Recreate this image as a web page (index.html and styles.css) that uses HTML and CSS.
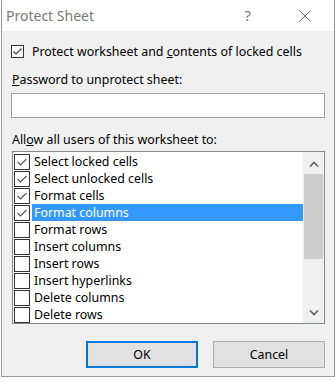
FILE: index.html
```html
<!DOCTYPE html>
<html>
<head>
<meta charset="utf-8">
<link rel="stylesheet" href="styles.css">
</head>
<body>
<div class="dialog">
  <div class="titlebar">
    <span class="title">Protect Sheet</span>
    <span class="help">?</span>
    <svg class="close" width="12" height="12" viewBox="0 0 12 12"><path d="M0.5 0.5L11.5 11.5M11.5 0.5L0.5 11.5" stroke="#666" stroke-width="1" fill="none"/></svg>
  </div>
  <div class="content">
    <div class="protect">
      <span class="cb small"><svg width="11" height="11" viewBox="0 0 11 11"><path d="M1.5 5.5L4 8L9.5 2.5" stroke="#444" stroke-width="1.2" fill="none"/></svg></span>
      <span class="lbl">Protect worksheet and <u>c</u>ontents of locked cells</span>
    </div>
    <div class="label pw"><u>P</u>assword to unprotect sheet:</div>
    <div class="input"></div>
    <div class="label allow">All<u>o</u>w all users of this worksheet to:</div>
    <div class="listbox">
      <div class="items">
        <div class="item"><span class="cb"><svg width="14" height="14" viewBox="0 0 14 14"><path d="M2.5 7L5.5 10L11.5 4" stroke="#555" stroke-width="1.1" fill="none"/></svg></span><span>Select locked cells</span></div>
        <div class="item"><span class="cb"><svg width="14" height="14" viewBox="0 0 14 14"><path d="M2.5 7L5.5 10L11.5 4" stroke="#555" stroke-width="1.1" fill="none"/></svg></span><span>Select unlocked cells</span></div>
        <div class="item"><span class="cb"><svg width="14" height="14" viewBox="0 0 14 14"><path d="M2.5 7L5.5 10L11.5 4" stroke="#555" stroke-width="1.1" fill="none"/></svg></span><span>Format cells</span></div>
        <div class="item selected"><span class="cb"><svg width="14" height="14" viewBox="0 0 14 14"><path d="M2.5 7L5.5 10L11.5 4" stroke="#555" stroke-width="1.1" fill="none"/></svg></span><span class="text">Format columns</span></div>
        <div class="item"><span class="cb"></span><span>Format rows</span></div>
        <div class="item"><span class="cb"></span><span>Insert columns</span></div>
        <div class="item"><span class="cb"></span><span>Insert rows</span></div>
        <div class="item"><span class="cb"></span><span>Insert hyperlinks</span></div>
        <div class="item"><span class="cb"></span><span>Delete columns</span></div>
        <div class="item"><span class="cb"></span><span>Delete rows</span></div>
      </div>
      <div class="scrollbar">
        <svg class="arrow up" width="10" height="6" viewBox="0 0 10 6"><path d="M1 5.5L5 1.5L9 5.5" stroke="#606060" stroke-width="1.6" fill="none"/></svg>
        <div class="thumb"></div>
        <div class="track"></div>
        <svg class="arrow down" width="10" height="6" viewBox="0 0 10 6"><path d="M1 0.5L5 4.5L9 0.5" stroke="#606060" stroke-width="1.6" fill="none"/></svg>
      </div>
    </div>
    <div class="buttons">
      <div class="btn ok">OK</div>
      <div class="btn">Cancel</div>
    </div>
  </div>
</div>
</body>
</html>
```

FILE: styles.css
```css
html, body {
  margin: 0;
  padding: 0;
}
body {
  background: #ffffff;
  width: 335px;
  height: 382px;
  overflow: hidden;
  font-family: "Noto Sans", "Open Sans", sans-serif;
  font-size: 12.4px;
  color: #000;
}
.dialog {
  margin-left: 1px;
  width: 332px;
  height: 376px;
  border: 1px solid #9a9a9a;
  border-top: none;
  background: #f0f0f0;
}
.titlebar {
  height: 31px;
  background: #fff;
  display: flex;
  align-items: center;
}
.title {
  margin-left: 4px;
  font-size: 14px;
  color: #7a7a7a;
  margin-top: -1px;
}
.help {
  margin-left: auto;
  margin-right: 48px;
  font-size: 15px;
  color: #7a7a7a;
  margin-top: -1px;
}
.close {
  margin-right: 23px;
}
.content {
  padding: 0 8px 0 9px;
}
.protect {
  display: flex;
  align-items: center;
  height: 15px;
  margin-top: 13px;
}
.cb {
  box-sizing: border-box;
  display: flex;
  align-items: center;
  justify-content: center;
  border: 1px solid #333;
  background: #fff;
}
.cb.small {
  width: 13px;
  height: 13px;
}
.lbl {
  margin-left: 8px;
  line-height: 15px;
}
.label {
  line-height: 16px;
  margin-left: 1px;
}
.pw {
  margin-top: 13px;
}
.input {
  box-sizing: border-box;
  margin-top: 5px;
  height: 25px;
  width: 314px;
  border: 1px solid #a0a0a0;
  background: #fff;
}
.allow {
  margin-top: 14px;
}
.listbox {
  box-sizing: border-box;
  margin-top: 3px;
  margin-left: 1px;
  width: 313px;
  height: 173px;
  border: 1px solid #828790;
  background: #fff;
  display: flex;
}
.items {
  flex: 1;
  padding-top: 1px;
}
.item {
  height: 17px;
  display: flex;
  align-items: center;
}
.item .cb {
  width: 16px;
  height: 16px;
  margin-left: 1px;
  flex: none;
}
.item span:last-child {
  margin-left: 2px;
  padding-left: 2px;
  line-height: 17px;
}
.item.selected span.text {
  background: #3399ff;
  color: #fff;
  flex: 1;
  height: 17px;
}
.scrollbar {
  width: 21px;
  background: #f0f0f0;
  display: flex;
  flex-direction: column;
  align-items: center;
}
.arrow.up {
  margin: 9px 0 7px;
}
.arrow.down {
  margin: 0 0 7px;
}
.thumb {
  width: 19px;
  height: 85px;
  background: #cdcdcd;
}
.track {
  flex: 1;
}
.buttons {
  display: flex;
  justify-content: flex-end;
  gap: 15px;
  margin-top: 17px;
  padding-right: 1px;
}
.btn {
  box-sizing: border-box;
  width: 112px;
  height: 27px;
  border: 1px solid #adadad;
  background: #e1e1e1;
  display: flex;
  align-items: center;
  justify-content: center;
}
.btn.ok {
  border: 2px solid #0078d7;
}
```
